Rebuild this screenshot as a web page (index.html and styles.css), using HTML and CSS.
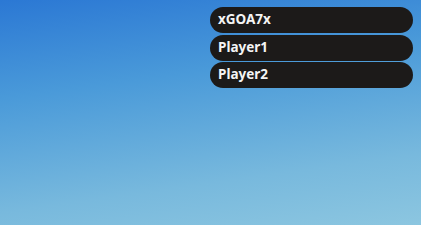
FILE: index.html
```html
<!DOCTYPE html>
<html lang="en">
<head>
    <meta charset="UTF-8">
    <meta name="viewport" content="width=device-width, initial-scale=1.0">
    <title>Players</title>
    <link rel="stylesheet" href="styles.css">
</head>
<body>

    <div class="player-list">
        <div class="player-row">xGOA7x</div>
        <div class="player-row">Player1</div>
        <div class="player-row">Player2</div>
    </div>

</body>
</html>
```

FILE: styles.css
```css
html,
body {
    height: 100%;
}

body {
    margin: 0;
    font-family: "Noto Sans", Arial, sans-serif;
    background: linear-gradient(172deg, #2b78d4 0%, #4a9ad9 35%, #78b9dd 75%, #8cc6e0 100%);
}

.player-list {
    display: flex;
    flex-direction: column;
    align-items: flex-end;
    gap: 1.5px;
    padding: 7px 8px 0 0;
}

.player-row {
    box-sizing: border-box;
    width: 203px;
    height: 26px;
    padding-left: 8px;
    border-radius: 13px;
    background-color: #1c1a19;
    color: #f4f4f4;
    font-size: 13.5px;
    font-weight: 700;
    line-height: 25px;
}
```
